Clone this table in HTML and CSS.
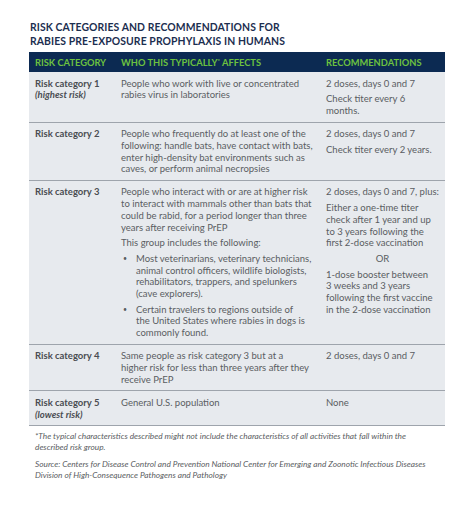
FILE: index.html
```html
<!DOCTYPE html>
<html lang="en">
<head>
<meta charset="utf-8">
<title>Rabies PrEP risk categories</title>
<link rel="stylesheet" href="styles.css">
</head>
<body>
<div class="page">
  <h1 class="title">RISK CATEGORIES AND RECOMMENDATIONS FOR<br>RABIES PRE-EXPOSURE PROPHYLAXIS IN HUMANS</h1>
  <table class="risk">
    <colgroup>
      <col class="c1"><col class="c2"><col class="c3">
    </colgroup>
    <thead>
      <tr>
        <th>RISK CATEGORY</th>
        <th>WHO THIS TYPICALLY<sup>*</sup> AFFECTS</th>
        <th>RECOMMENDATIONS</th>
      </tr>
    </thead>
    <tbody>
      <tr>
        <td class="cat">Risk category 1<br><em>(highest risk)</em></td>
        <td><p>People who work with live or concentrated rabies virus in laboratories</p></td>
        <td><p>2 doses, days 0 and 7</p><p>Check titer every 6 months.</p></td>
      </tr>
      <tr>
        <td class="cat">Risk category 2</td>
        <td><p>People who frequently do at least one of the following: handle bats, have contact with bats, enter high-density bat environments such as caves, or perform animal necropsies</p></td>
        <td><p>2 doses, days 0 and 7</p><p>Check titer every 2 years.</p></td>
      </tr>
      <tr>
        <td class="cat">Risk category 3</td>
        <td>
          <p>People who interact with or are at higher risk to interact with mammals other than bats that could be rabid, for a period longer than three years after receiving PrEP</p>
          <p>This group includes the following:</p>
          <ul class="list">
            <li>Most veterinarians, veterinary technicians, animal control officers, wildlife biologists, rehabilitators, trappers, and spelunkers (cave explorers).</li>
            <li>Certain travelers to regions outside of<br>the United States where rabies in dogs is commonly found.</li>
          </ul>
        </td>
        <td>
          <p>2 doses, days 0 and 7, plus:</p>
          <p>Either a one-time titer check after 1 year and up to 3 years following the first 2-dose vaccination</p>
          <p class="or">OR</p>
          <p>1-dose booster between<br>3 weeks and 3 years following the first vaccine in the 2-dose vaccination</p>
        </td>
      </tr>
      <tr>
        <td class="cat">Risk category 4</td>
        <td><p>Same people as risk category 3 but at a<br>higher risk for less than three years after they receive PrEP</p></td>
        <td><p>2 doses, days 0 and 7</p></td>
      </tr>
      <tr>
        <td class="cat">Risk category 5<br><em>(lowest risk)</em></td>
        <td><p>General U.S. population</p></td>
        <td><p>None</p></td>
      </tr>
    </tbody>
  </table>
  <div class="notes">
    <p>*The typical characteristics described might not include the characteristics of all activities that fall within the described risk group.</p>
    <p>Source: Centers for Disease Control and Prevention National Center for Emerging and Zoonotic Infectious Diseases Division of High-Consequence Pathogens and Pathology</p>
  </div>
</div>
</body>
</html>
```
FILE: styles.css
```css
* { box-sizing: border-box; }
html, body { margin: 0; padding: 0; background: #ffffff; }
body { font-family: Lato, "Open Sans", "Liberation Sans", sans-serif; }

.page {
  width: 474px;
  padding: 20px 29px 0 29px;
}

.title {
  margin: 0 0 4px 1px;
  font-size: 10.4px;
  line-height: 14px;
  font-weight: 700;
  color: #1c2e50;
  letter-spacing: 0.1px;
}

.risk {
  width: 416px;
  border-collapse: collapse;
  table-layout: fixed;
}
.c1 { width: 86px; }
.c2 { width: 205px; }
.c3 { width: 125px; }

.risk th {
  background: #0c2a52;
  color: #6cc13f;
  font-size: 9.3px;
  font-weight: 700;
  text-align: left;
  height: 20px;
  padding: 1px 6px 0 6px;
  white-space: nowrap;
}
.risk th sup { font-size: 6px; vertical-align: 3px; line-height: 0; }

.risk td {
  background: #e7eaee;
  color: #5a5d62;
  font-size: 9.5px;
  line-height: 11.7px;
  vertical-align: top;
  padding: 5.5px 6px 5px 6px;
  border-bottom: 1.5px solid #9ea4ac;
}
.risk td.cat { color: #4a4d52; font-weight: 700; }
.risk td.cat em { font-style: italic; }

.risk p { margin: 0 0 4px 0; }
.risk p:last-child { margin-bottom: 0; }
.risk .or { text-align: center; }

.list {
  margin: 0;
  padding: 0;
  list-style: none;
}
.list li {
  position: relative;
  padding-left: 15px;
  margin-bottom: 4px;
}
.list li:last-child { margin-bottom: 0; }
.list li::before {
  content: "\2022";
  position: absolute;
  left: 2px;
  top: 0;
  font-size: 7px;
  line-height: 11.7px;
}

.notes {
  padding: 5px 6px 0 6px;
  color: #5a5d62;
  font-size: 8.3px;
  line-height: 10.5px;
  font-style: italic;
}
.notes p { margin: 0 0 7px 0; }
```
